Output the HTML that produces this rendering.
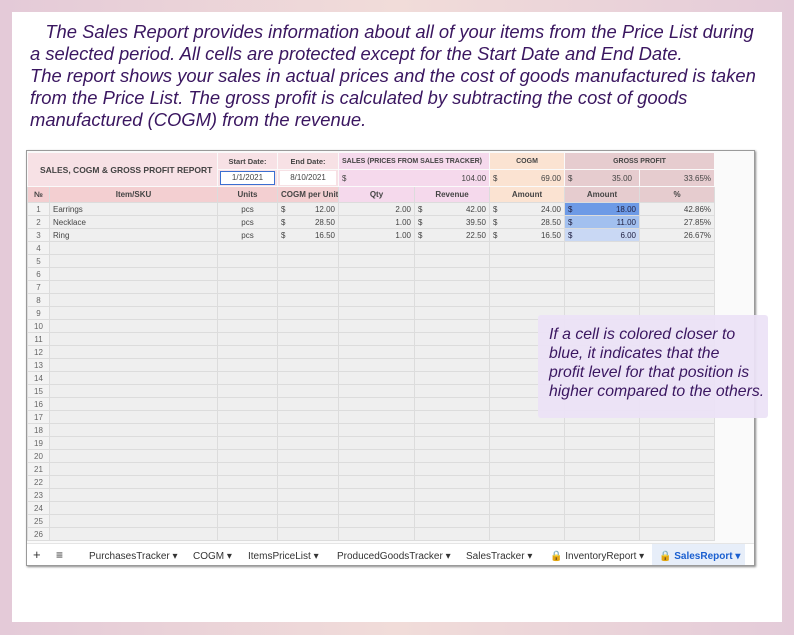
<!DOCTYPE html>
<html><head><meta charset="utf-8"><style>
*{margin:0;padding:0;box-sizing:border-box}
body{width:794px;height:635px;overflow:hidden;background:linear-gradient(90deg,#e4cad8,#f1dcd9 50%,#e4cbd9);font-family:"Liberation Sans",sans-serif;position:relative}
.card{position:absolute;left:12px;top:12px;width:770px;height:610px;background:#fff}
.intro{position:absolute;left:30px;top:21px;width:750px;font-style:italic;font-size:18.4px;line-height:22px;color:#3a1660;white-space:nowrap}
.sheet{position:absolute;left:26px;top:150px;width:729px;height:416px;border:1px solid #9a9a9a;background:#fafafa;box-shadow:1px 1px 2px #888;overflow:hidden}
table{border-collapse:collapse;table-layout:fixed;width:729px;position:absolute;left:0;top:1px;font-size:8px;color:#444}
td{border:1px solid #dcdcdc;height:13px;padding:0 3px;white-space:nowrap;overflow:hidden;background:#efefef}
td.n{background:#f3f3f3;color:#666;text-align:center}
.r{text-align:right}.c{text-align:center}
.h1 td{height:17px;border-color:transparent;font-weight:bold;color:#444}
.h2 td{height:16px;font-weight:bold;color:#444;text-align:center}
.pk{background:#f7e1e5!important}.mg{background:#f5d9ec!important}.or{background:#fbe3d2!important}.br{background:#e6cccf!important}.rd{background:#f3cfd1!important}
.wt{background:#fafafa!important;border:none!important}
.tabs{position:absolute;left:0;top:392px;width:729px;height:24px;background:#fff;border-top:1px solid #e5e5e5;font-size:10px;color:#333}
.tabs span{position:absolute;top:7px}
.note{position:absolute;left:538px;top:315px;width:230px;height:103px;background:rgba(236,226,246,.93);border-radius:3px;padding:10px 0 0 11px;font-style:italic;font-size:15.8px;line-height:19px;color:#3a1660;white-space:nowrap}
</style></head><body>
<div class="card"></div>
<div class="intro">&nbsp;&nbsp;&nbsp;The Sales Report provides information about all of your items from the Price List during<br>a selected period. All cells are protected except for the Start Date and End Date.<br>The report shows your sales in actual prices and the cost of goods manufactured is taken<br>from the Price List. The gross profit is calculated by subtracting the cost of goods<br>manufactured (COGM) from the revenue.</div>
<div class="sheet">
<table>
<colgroup><col style="width:22px"><col style="width:168px"><col style="width:60px"><col style="width:61px"><col style="width:76px"><col style="width:75px"><col style="width:75px"><col style="width:75px"><col style="width:75px"><col style="width:42px"></colgroup>
<tr class="h1"><td colspan="2" rowspan="2" class="pk" style="font-size:8.5px;padding-left:12px">SALES, COGM &amp; GROSS PROFIT REPORT</td><td class="pk c" style="font-size:7.5px">Start Date:</td><td class="pk c" style="font-size:7.5px">End Date:</td><td class="mg" colspan="2" style="font-size:7px">SALES (PRICES FROM SALES TRACKER)</td><td class="or c" style="font-size:7px">COGM</td><td class="br c" colspan="2" style="font-size:7px">GROSS PROFIT</td><td class="wt"></td></tr>
<tr class="h1"><td class="pk" style="padding:0 2px"><div style="border:1.5px solid #3b6fd1;background:#fff;text-align:center;font-weight:normal;height:14px;line-height:12px">1/1/2021</div></td><td class="pk" style="padding:0 2px"><div style="background:#fff;text-align:center;font-weight:normal;height:14px;line-height:13px">8/10/2021</div></td><td class="mg" colspan="2" style="font-weight:normal"><span>$</span><span style="float:right">104.00</span></td><td class="or" style="font-weight:normal"><span>$</span><span style="float:right">69.00</span></td><td class="br" style="font-weight:normal"><span>$</span><span style="float:right;margin-right:4px">35.00</span></td><td class="br r" style="font-weight:normal">33.65%</td><td class="wt"></td></tr>
<tr class="h2"><td class="rd">№</td><td class="rd">Item/SKU</td><td class="rd">Units</td><td class="rd">COGM per Unit</td><td class="mg">Qty</td><td class="mg">Revenue</td><td class="or">Amount</td><td class="br">Amount</td><td class="br">%</td><td class="wt"></td></tr>
<tr><td class="n">1</td><td>Earrings</td><td class="c">pcs</td><td>$<span style="float:right">12.00</span></td><td class="r">2.00</td><td>$<span style="float:right">42.00</span></td><td>$<span style="float:right">24.00</span></td><td style="background:#6d9ae6;color:#224">$<span style="float:right">18.00</span></td><td class="r">42.86%</td><td class="wt"></td></tr>
<tr><td class="n">2</td><td>Necklace</td><td class="c">pcs</td><td>$<span style="float:right">28.50</span></td><td class="r">1.00</td><td>$<span style="float:right">39.50</span></td><td>$<span style="float:right">28.50</span></td><td style="background:#a2c0ef;color:#224">$<span style="float:right">11.00</span></td><td class="r">27.85%</td><td class="wt"></td></tr>
<tr><td class="n">3</td><td>Ring</td><td class="c">pcs</td><td>$<span style="float:right">16.50</span></td><td class="r">1.00</td><td>$<span style="float:right">22.50</span></td><td>$<span style="float:right">16.50</span></td><td style="background:#c9d8f4;color:#224">$<span style="float:right">6.00</span></td><td class="r">26.67%</td><td class="wt"></td></tr>
<tbody id="rest"></tbody>
</table>
<div class="tabs">
<span style="left:6px;font-size:13px;top:3px">+</span><span style="left:29px;font-size:12px;top:4px">≡</span>
<span style="left:62px">PurchasesTracker ▾</span><span style="left:166px">COGM ▾</span><span style="left:221px">ItemsPriceList ▾</span><span style="left:310px">ProducedGoodsTracker ▾</span><span style="left:439px">SalesTracker ▾</span><span style="left:523px">🔒 InventoryReport ▾</span>
<div style="position:absolute;left:625px;top:0;width:93px;height:23px;background:#e7eef9"></div><span style="left:632px;color:#1a5fd0;font-weight:bold">🔒 SalesReport ▾</span>
</div>
</div>
<div class="note">If a cell is colored closer to<br>blue, it indicates that the<br>profit level for that position is<br>higher compared to the others.</div>
<script>
var h='';for(var i=4;i<=26;i++){h+='<tr><td class="n">'+i+'</td>';for(var j=0;j<8;j++)h+='<td></td>';h+='<td class="wt"></td></tr>';}
document.getElementById('rest').innerHTML=h;
</script>
</body></html>
